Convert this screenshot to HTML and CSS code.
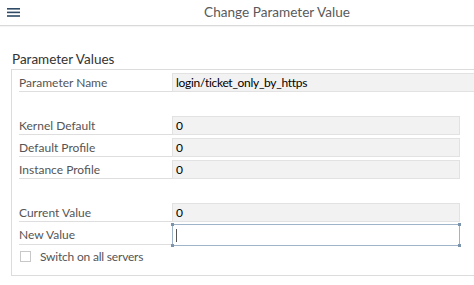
FILE: index.html
```html
<!DOCTYPE html>
<html lang="en">
<head>
    <meta charset="UTF-8">
    <title>Change Parameter Value</title>
    <link rel="stylesheet" href="styles.css">
</head>
<body>
    <!-- 상단 바 -->
    <header class="shell-bar">
        <button class="menu-btn" aria-label="Menu">
            <svg width="13" height="9" viewBox="0 0 13 9">
                <rect x="0" y="0" width="13" height="1.6" fill="#2e4a66"/>
                <rect x="0" y="3.6" width="13" height="1.6" fill="#2e4a66"/>
                <rect x="0" y="7.2" width="13" height="1.6" fill="#2e4a66"/>
            </svg>
        </button>
        <h1 class="shell-title">Change Parameter Value</h1>
    </header>

    <main class="content">
        <h2 class="section-title">Parameter Values</h2>

        <div class="panel">
            <div class="row">
                <span class="label">Parameter Name</span>
                <span class="field wide">login/ticket_only_by_https</span>
            </div>

            <div class="group">
                <div class="row">
                    <span class="label">Kernel Default</span>
                    <span class="field">0</span>
                </div>
                <div class="row">
                    <span class="label">Default Profile</span>
                    <span class="field">0</span>
                </div>
                <div class="row">
                    <span class="label">Instance Profile</span>
                    <span class="field">0</span>
                </div>
            </div>

            <div class="group">
                <div class="row">
                    <span class="label">Current Value</span>
                    <span class="field">0</span>
                </div>
                <div class="row row-input">
                    <span class="label">New Value</span>
                    <span class="field input">
                        <span class="caret"></span>
                        <i class="handle tl"></i><i class="handle tr"></i>
                        <i class="handle bl"></i><i class="handle br"></i>
                    </span>
                </div>
            </div>

            <label class="check-row">
                <span class="checkbox"></span>
                Switch on all servers
            </label>
        </div>
    </main>
</body>
</html>
```

FILE: styles.css
```css
/* 기본 스타일 */
body {
    margin: 0;
    font-family: 'Lato', 'Liberation Sans', sans-serif;
    background-color: #ffffff;
    color: #333333;
    overflow: hidden;
}

/* 상단 바 */
.shell-bar {
    height: 25px;
    border-bottom: 1px solid #d9d9d9;
    box-shadow: 0 1px 1px rgba(0, 0, 0, 0.04);
    display: flex;
    align-items: center;
}

.menu-btn {
    margin-left: 7px;
    padding: 0;
    border: none;
    background: none;
    display: flex;
}

.shell-title {
    flex: 1;
    margin: 0 0 1px 60px;
    text-align: center;
    font-size: 13.6px;
    font-weight: normal;
    color: #5a5a5a;
}

/* 컨텐츠 */
.content {
    padding: 24px 0 0 11px;
}

.section-title {
    margin: 0 0 0 1px;
    font-size: 13.5px;
    line-height: 19px;
    font-weight: normal;
    color: #333333;
}

.panel {
    border: 1px solid #dcdcdc;
    border-right: none;
    padding: 3px 0 11px 7px;
}

.group {
    margin-top: 24px;
}

.row {
    display: flex;
    margin-bottom: 3px;
}

.label {
    width: 153px;
    height: 19px;
    line-height: 19px;
    font-size: 12px;
    color: #555555;
    border-bottom: 1px solid #dedede;
    box-sizing: border-box;
}

.field {
    width: 288px;
    height: 19px;
    line-height: 17px;
    box-sizing: border-box;
    padding-left: 3px;
    font-size: 12px;
    color: #000000;
    background-color: #f2f2f2;
    border: 1px solid #e2e2e2;
}

.field.wide {
    width: auto;
    flex: 1;
    border-right: none;
    letter-spacing: -0.3px;
}

/* 입력 필드 */
.row-input {
    margin-top: -1px;
}

.row-input .label {
    height: 21px;
    line-height: 21px;
}

.field.input {
    height: 22px;
    background-color: #ffffff;
    border-color: #9fb4c9;
    position: relative;
}

.caret {
    position: absolute;
    left: 3px;
    top: 4px;
    width: 1px;
    height: 13px;
    background-color: #555555;
}

.handle {
    position: absolute;
    width: 3px;
    height: 3px;
    background-color: #7b93ab;
}

.handle.tl { left: -2px; top: -2px; }
.handle.tr { right: -2px; top: -2px; }
.handle.bl { left: -2px; bottom: -2px; }
.handle.br { right: -2px; bottom: -2px; }

/* 체크박스 */
.check-row {
    display: flex;
    align-items: center;
    margin-top: 3px;
    font-size: 12px;
    letter-spacing: -0.2px;
    color: #555555;
}

.checkbox {
    width: 9px;
    height: 9px;
    margin: 0 9px 0 1px;
    border: 1px solid #c8c8c8;
    background-color: #ffffff;
}
```
